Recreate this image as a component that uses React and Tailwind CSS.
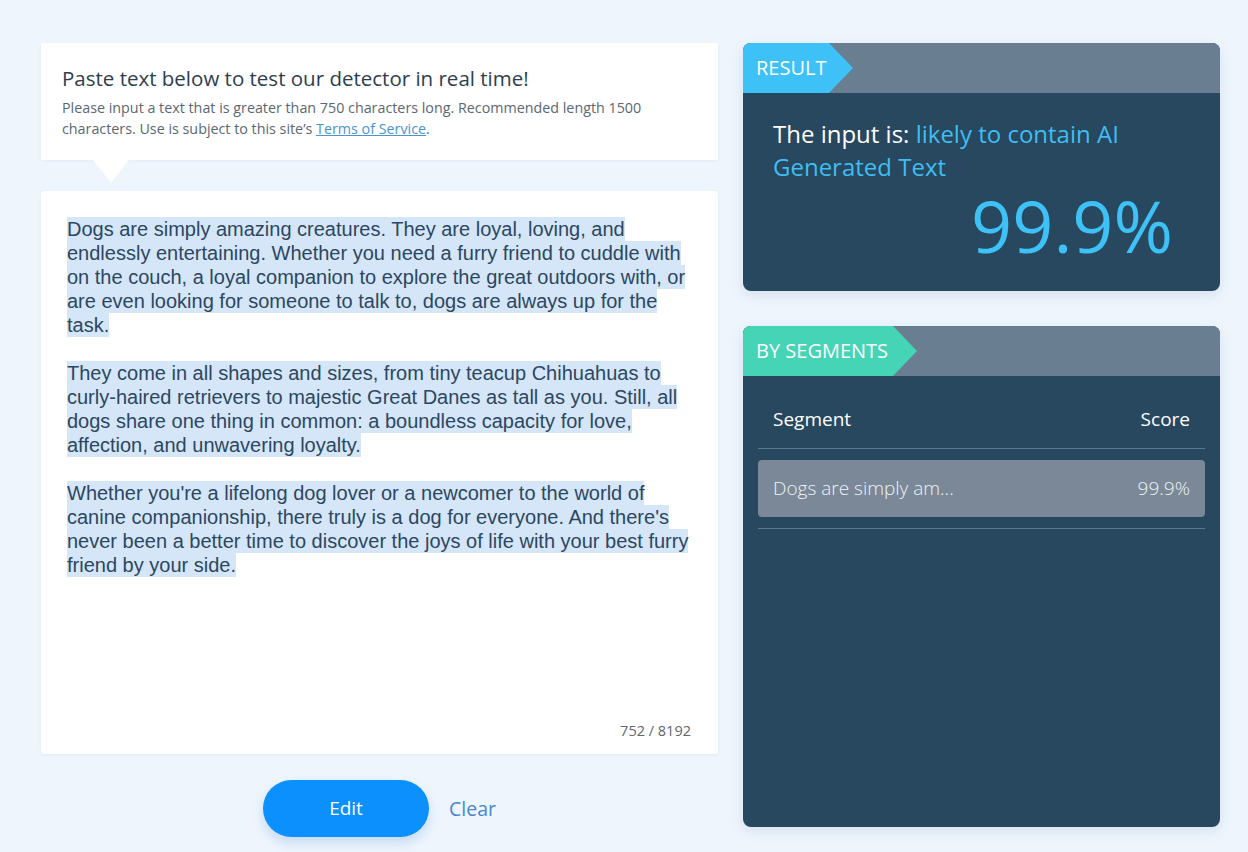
import React from "react";

const paragraphs = [
  "Dogs are simply amazing creatures. They are loyal, loving, and endlessly entertaining. Whether you need a furry friend to cuddle with on the couch, a loyal companion to explore the great outdoors with, or are even looking for someone to talk to, dogs are always up for the task. ",
  "They come in all shapes and sizes, from tiny teacup Chihuahuas to curly-haired retrievers to majestic Great Danes as tall as you. Still, all dogs share one thing in common: a boundless capacity for love, affection, and unwavering loyalty. ",
  "Whether you're a lifelong dog lover or a newcomer to the world of canine companionship, there truly is a dog for everyone. And there's never been a better time to discover the joys of life with your best furry friend by your side.",
];

const TagHeader = ({ label, color, width }) => (
  <div className="flex h-[50px] bg-[#6a7e92] rounded-t-[8px] overflow-hidden">
    <div className={`flex items-center pl-[13px] text-white text-[20px] ${color} ${width}`}
      style={{ clipPath: "polygon(0 0, calc(100% - 24px) 0, 100% 50%, calc(100% - 24px) 100%, 0 100%)" }}>
      {label}
    </div>
  </div>
);

const App = () => {
  return (
    <div className="min-h-[852px] bg-[#eef5fd] font-['Open_Sans',sans-serif] text-[#2c3e50]">
      <div className="flex gap-[25px] pl-[41px] pt-[43px]">
        {/* left column */}
        <div className="w-[677px] flex flex-col">
          <div className="bg-white h-[117px] px-[21px] pt-[22px] shadow-[0_1px_3px_rgba(40,80,130,0.06)]">
            <h2 className="text-[20.5px] leading-[26px] text-[#2d3e4f]">Paste text below to test our detector in real time!</h2>
            <p className="mt-[6px] text-[14.3px] leading-[21px] text-[#5b6773]">
              Please input a text that is greater than 750 characters long. Recommended length 1500 characters. Use is subject to this site’s{" "}
              <a className="text-[#4b94cf] underline">Terms of Service</a>.
            </p>
          </div>
          <div className="pl-[52px] h-[31px]">
            <div className="w-0 h-0 border-l-[18px] border-r-[18px] border-t-[23px] border-l-transparent border-r-transparent border-t-white" />
          </div>
          <div className="bg-white h-[563px] rounded-[3px] px-[26px] pt-[26px] pb-[12px] flex flex-col shadow-[0_1px_3px_rgba(40,80,130,0.06)]">
            <div className="flex-1 font-['Liberation_Sans',Arial,sans-serif] text-[20px] leading-[24px] text-[#2c4761] flex flex-col gap-[24px]">
              {paragraphs.map((p, i) => (
                <p key={i}><span className="bg-[#d5e6f9] py-[1px]">{p}</span></p>
              ))}
            </div>
            <div className="text-right text-[14.5px] text-[#5f666d] pr-[1px]">752 / 8192</div>
          </div>
          <div className="flex justify-center items-center gap-[20px] mt-[26px]">
            <button className="w-[166px] h-[57px] rounded-full bg-[#0b90fd] text-white text-[19px] shadow-[0_6px_12px_rgba(20,100,200,0.18)]">Edit</button>
            <button className="text-[19.5px] text-[#4787d1]">Clear</button>
          </div>
        </div>

        {/* right column */}
        <div className="w-[477px] flex flex-col gap-[35px]">
          <div className="h-[248px] rounded-[8px] bg-[#27485f] shadow-[0_4px_14px_rgba(40,80,130,0.12)] flex flex-col">
            <TagHeader label="RESULT" color="bg-[#3ec1f6]" width="w-[110px]" />
            <div className="px-[30px] pt-[24px]">
              <p className="text-[24px] leading-[33px] text-white">
                The input is: <span className="text-[#40bdf1]">likely to contain AI Generated Text</span>
              </p>
              <div className="text-right pr-[17px] text-[72px] leading-[76px] text-[#3ec1f6] mt-[4px]">99.9%</div>
            </div>
          </div>
          <div className="h-[501px] rounded-[8px] bg-[#27485f] shadow-[0_4px_14px_rgba(40,80,130,0.12)] flex flex-col">
            <TagHeader label="BY SEGMENTS" color="bg-[#45d4b6]" width="w-[174px]" />
            <div className="px-[15px] pt-[30px]">
              <div className="flex justify-between px-[15px] text-[19px] text-white leading-[26px] pb-[16px] border-b border-[#5a7890]">
                <span>Segment</span>
                <span>Score</span>
              </div>
              <div className="mt-[11px] h-[57px] rounded-[4px] bg-[#7a8898] flex items-center justify-between px-[15px] text-[19px] text-[#eef2f6] font-light">
                <span>Dogs are simply am...</span>
                <span>99.9%</span>
              </div>
              <div className="mt-[11px] border-b border-[#5a7890]" />
            </div>
          </div>
        </div>
      </div>
    </div>
  );
};

export default App;
